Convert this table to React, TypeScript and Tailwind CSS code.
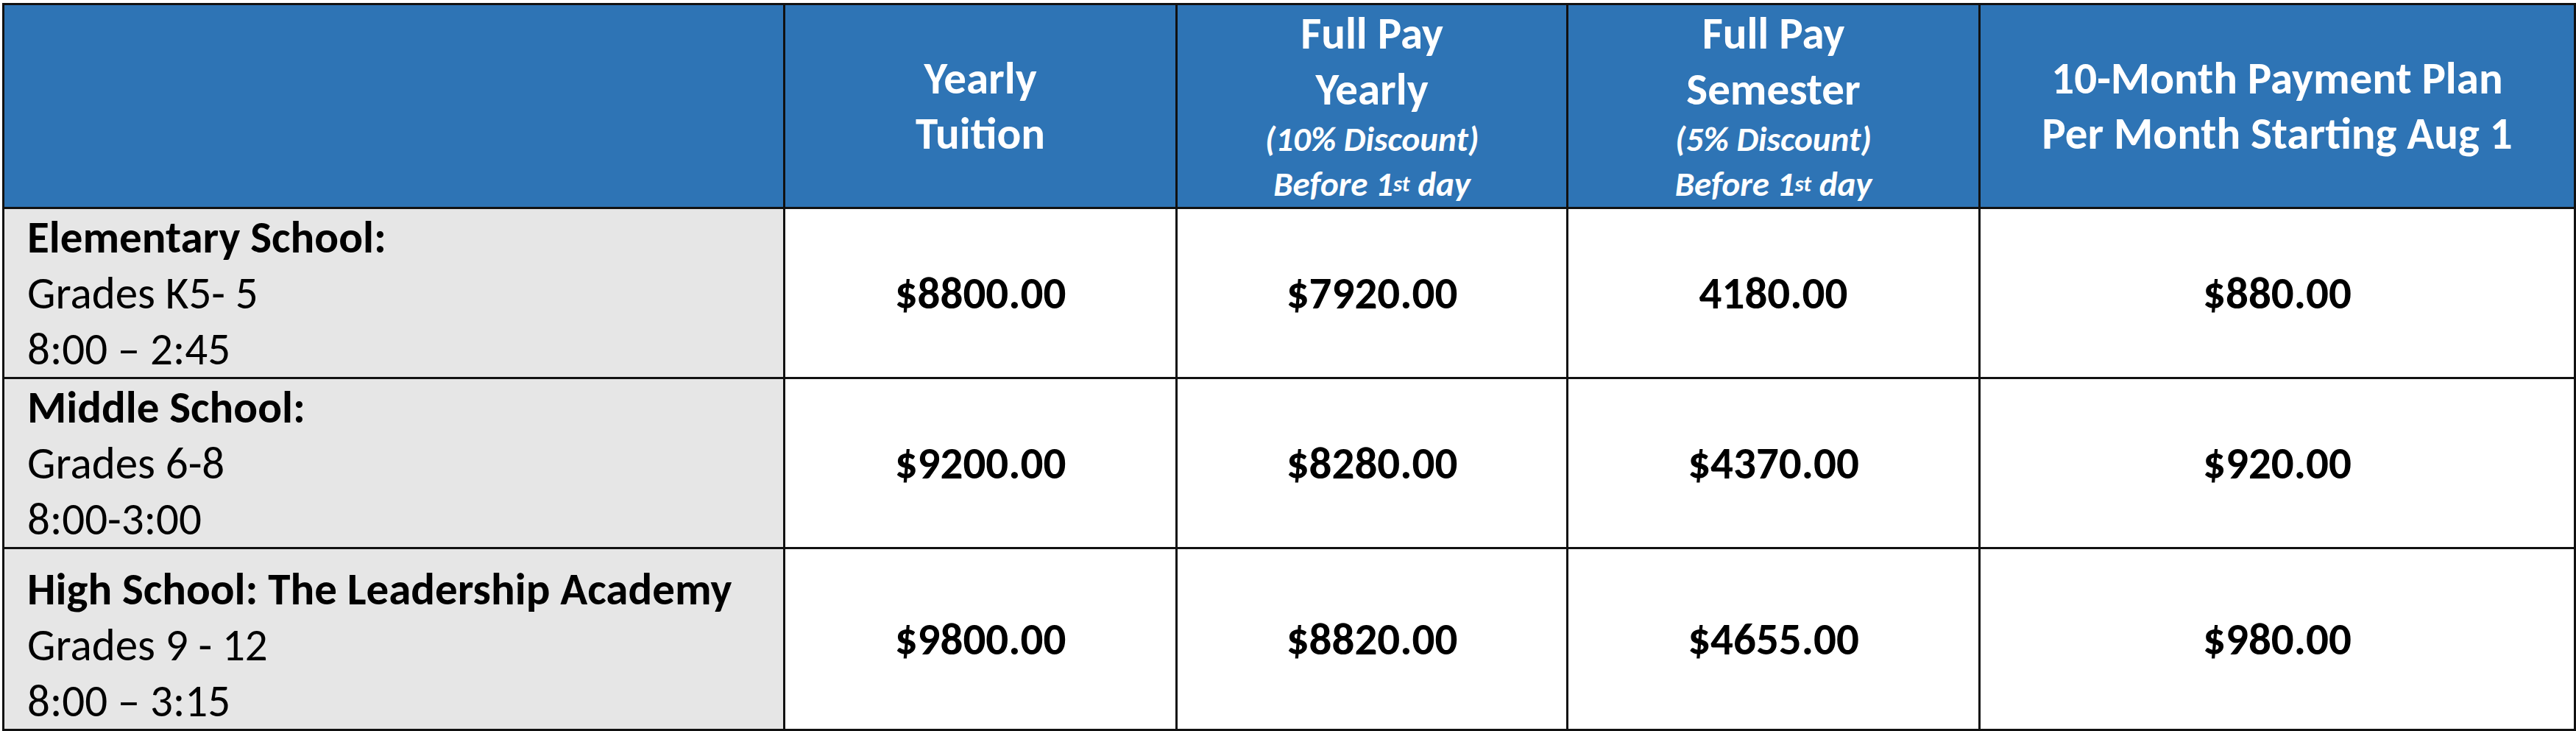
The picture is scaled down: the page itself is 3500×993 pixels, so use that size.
import React from "react";

const rows = [
  {
    name: "Elementary School:",
    grades: "Grades K5- 5",
    hours: "8:00 – 2:45",
    prices: ["$8800.00", "$7920.00", "4180.00", "$880.00"],
    h: "h-[228px]",
    pad: "",
  },
  {
    name: "Middle School:",
    grades: "Grades 6-8",
    hours: "8:00-3:00",
    prices: ["$9200.00", "$8280.00", "$4370.00", "$920.00"],
    h: "h-[229px]",
    pad: "",
  },
  {
    name: "High School: The Leadership Academy",
    grades: "Grades 9 - 12",
    hours: "8:00 – 3:15",
    prices: ["$9800.00", "$8820.00", "$4655.00", "$980.00"],
    h: "h-[247px]",
    pad: "pt-[16px]",
  },
];

function FullPayHead({ title, discount }: { title: string; discount: string }) {
  return (
    <div className="flex flex-col items-center">
      <span className="leading-[76px]">Full Pay</span>
      <span className="leading-[76px]">{title}</span>
      <span className="italic text-[47px] leading-[61px]">{discount}</span>
      <span className="italic text-[47px] leading-[61px]">
        Before 1<sup className="text-[31px] relative -top-[6px]">st</sup> day
      </span>
    </div>
  );
}

export default function App() {
  return (
    <div className="min-h-screen bg-white pt-[4px] pl-[3px] font-['Carlito','Calibri','Lato',sans-serif]">
      <table className="table-fixed border-collapse w-[3494px] text-black">
        <colgroup>
          <col className="w-[1061px]" />
          <col className="w-[533px]" />
          <col className="w-[531px]" />
          <col className="w-[560px]" />
          <col className="w-[809px]" />
        </colgroup>
        <thead>
          <tr className="h-[273px] bg-[#2e74b5] text-white font-bold text-[61px]">
            <th className="border-[3px] border-[#111]"></th>
            <th className="border-[3px] border-[#111] align-middle leading-[75px] font-bold">
              Yearly
              <br />
              Tuition
            </th>
            <th className="border-[3px] border-[#111] align-middle font-bold">
              <FullPayHead title="Yearly" discount="(10% Discount)" />
            </th>
            <th className="border-[3px] border-[#111] align-middle font-bold">
              <FullPayHead title="Semester" discount="(5% Discount)" />
            </th>
            <th className="border-[3px] border-[#111] align-middle leading-[75px] font-bold">
              10-Month Payment Plan
              <br />
              Per Month Starting Aug 1
            </th>
          </tr>
        </thead>
        <tbody>
          {rows.map((r) => (
            <tr key={r.name} className={`${r.h} text-[61px] leading-[76px]`}>
              <td className={`border-[3px] border-[#111] bg-[#e6e6e6] pl-[31px] align-top ${r.pad}`}>
                <div className="font-bold">{r.name}</div>
                <div>{r.grades}</div>
                <div>{r.hours}</div>
              </td>
              {r.prices.map((p, i) => (
                <td key={i} className="border-[3px] border-[#111] bg-white text-center align-middle font-bold">
                  {p}
                </td>
              ))}
            </tr>
          ))}
        </tbody>
      </table>
    </div>
  );
}
